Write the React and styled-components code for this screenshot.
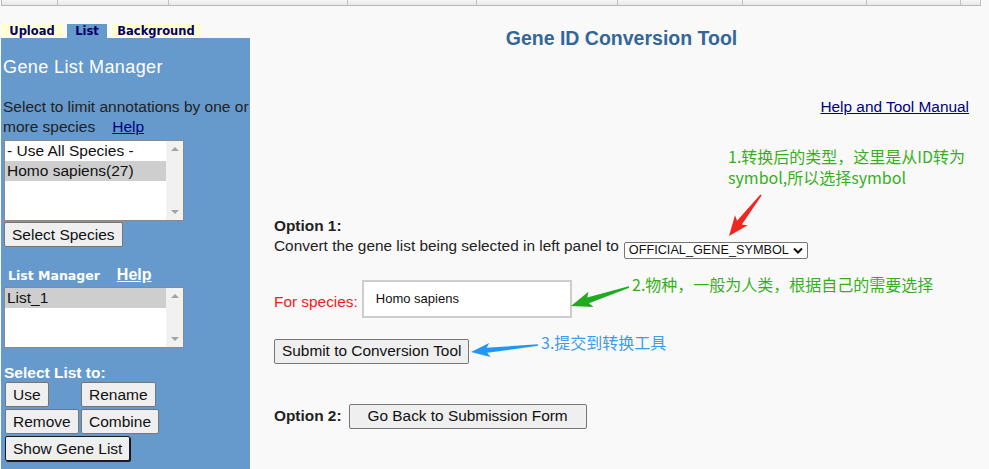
import React from 'react';
import styled, { createGlobalStyle } from 'styled-components';

const GlobalStyle = createGlobalStyle`
  html, body { margin: 0; padding: 0; background: #f9f9f9; }
  body {
    font-family: "Liberation Sans", Arial, sans-serif;
    font-size: 15.4px;
    color: #222;
  }
  * { box-sizing: border-box; }
`;

const Page = styled.div`
  width: 989px;
  height: 469px;
  overflow: hidden;
  background: #f9f9f9;
`;

const NavStrip = styled.div`
  display: flex;
  height: 6px;
  margin-left: 1px;
  width: 980px;
  border-left: 1px solid #bbb;
  border-bottom: 1px solid #b8b8b8;
`;

const NavCell = styled.div`
  width: ${(p) => p.$w}px;
  border-right: 1px solid #c2c2c2;
  background: linear-gradient(#f6f6f6, #e8e8e8);
`;

const Main = styled.div`
  display: flex;
  height: 463px;
`;

const Sidebar = styled.div`
  width: 249px;
  margin-left: 1px;
  padding-top: 18px;
  display: flex;
  flex-direction: column;
`;

const Tabs = styled.div`
  display: flex;
  height: 14px;
  gap: 4px;
`;

const Tab = styled.div`
  width: ${(p) => p.$w}px;
  background: ${(p) => (p.$active ? '#6699cc' : '#ffffd4')};
  color: #000066;
  font-family: "DejaVu Sans", Verdana, sans-serif;
  font-weight: bold;
  font-size: 11.5px;
  line-height: 15px;
  text-align: center;
`;

const Panel = styled.div`
  flex: 1;
  background: #6699cc;
  padding-left: 2px;
`;

const PanelTitle = styled.div`
  margin-top: 19px;
  color: #fff;
  font-size: 18px;
  line-height: 20px;
  letter-spacing: 0.4px;
`;

const Desc = styled.div`
  margin-top: 20px;
  font-size: 15.5px;
  line-height: 20px;
  color: #222;
  white-space: nowrap;
`;

const DarkLink = styled.a`
  color: #000080;
  text-decoration: underline;
  margin-left: 17px;
`;

const ListBox = styled.div`
  display: flex;
  width: 180px;
  height: ${(p) => p.$h}px;
  margin-top: ${(p) => p.$mt}px;
  margin-left: 1px;
  background: #fff;
  border: 1px solid #8a8a8a;
`;

const Options = styled.div`
  flex: 1;
`;

const Option = styled.div`
  height: 20px;
  line-height: 20px;
  padding-left: 2px;
  font-size: 15.5px;
  color: #111;
  background: ${(p) => (p.$selected ? '#cecece' : 'transparent')};
`;

const Scroll = styled.div`
  width: 17px;
  background: #f1f1f1;
  display: flex;
  flex-direction: column;
  justify-content: space-between;
  align-items: center;
  padding: 6px 0;
`;

const ScrollArrow = styled.div`
  width: 0;
  height: 0;
  border-left: 4px solid transparent;
  border-right: 4px solid transparent;
  border-${(p) => (p.$down ? 'top' : 'bottom')}: 4px solid #a3a3a3;
`;

const Button = styled.button`
  height: 25px;
  padding: 0 ${(p) => p.$px ?? 7}px;
  margin-top: ${(p) => p.$mt ?? 0}px;
  margin-left: ${(p) => p.$ml ?? 0}px;
  background: #efefef;
  border: 1px solid ${(p) => (p.$focus ? '#1a1a1a' : '#767676')};
  box-shadow: ${(p) => (p.$focus ? '1px 1px 0 #1a1a1a' : 'none')};
  border-radius: 2px;
  font-family: "Liberation Sans", Arial, sans-serif;
  font-size: ${(p) => p.$fs ?? 15.5}px;
  color: #111;
  white-space: nowrap;
`;

const ListHeader = styled.div`
  display: flex;
  align-items: baseline;
  margin-top: 19px;
  height: 20px;
`;

const HeaderLabel = styled.span`
  margin-left: 5px;
  color: #fff;
  font-family: "DejaVu Sans", Verdana, sans-serif;
  font-weight: bold;
  font-size: 12.5px;
`;

const WhiteLink = styled.a`
  margin-left: 17px;
  color: #fff;
  font-weight: bold;
  font-size: 16px;
  text-decoration: underline;
`;

const SelectListTo = styled.div`
  margin-top: 15px;
  margin-left: 1px;
  color: #fff;
  font-weight: bold;
  font-size: 15.5px;
  line-height: 19px;
`;

const ButtonGrid = styled.div`
  display: grid;
  grid-template-columns: 76px auto;
  row-gap: 2px;
  margin-left: 2px;
  justify-items: start;
`;

const Content = styled.div`
  flex: 1;
  position: relative;
  padding: 20px 20px 0 24px;
`;

const Title = styled.h1`
  margin: 0;
  text-align: center;
  font-size: 19.5px;
  line-height: 24px;
  color: #336699;
  font-weight: bold;
`;

const HelpRow = styled.div`
  margin-top: 47px;
  text-align: right;
  line-height: 20px;
  a { color: #000080; text-decoration: underline; }
`;

const OptionLabel = styled.div`
  margin-top: ${(p) => p.$mt ?? 0}px;
  font-weight: bold;
  line-height: 20px;
`;

const Line = styled.div`
  line-height: 20px;
  white-space: nowrap;
`;

const FakeSelect = styled.span`
  display: inline-flex;
  align-items: center;
  gap: 4px;
  height: 17px;
  margin-left: 5px;
  padding: 0 4px;
  vertical-align: -3px;
  background: #fff;
  border: 1px solid #767676;
  border-radius: 2px;
  font-size: 12.7px;
  color: #111;
`;

const SpeciesRow = styled.div`
  display: flex;
  align-items: center;
  gap: 4px;
  margin-top: 21px;
`;

const RedLabel = styled.span`
  color: #ee1c1c;
  margin-top: 6px;
`;

const SpeciesInput = styled.div`
  width: 210px;
  height: 38px;
  border: 2px solid #cdcdcd;
  background: #fff;
  padding-left: 12px;
  display: flex;
  align-items: center;
  font-size: 13px;
  color: #111;
`;

const Option2Row = styled.div`
  display: flex;
  align-items: center;
  gap: 7px;
  margin-top: 40px;
`;

const Note = styled.div`
  position: absolute;
  left: ${(p) => p.$x}px;
  top: ${(p) => p.$y}px;
  color: ${(p) => p.$color};
  font-family: "Noto Sans CJK SC", "Liberation Sans", sans-serif;
  font-size: 16px;
  line-height: 21px;
  white-space: nowrap;
`;

const Overlay = styled.svg`
  position: absolute;
  left: 0;
  top: 0;
  pointer-events: none;
`;

function Arrow({ from, to, color, h = 17, hw = 8, w1 = 3, b = 3 }) {
  const dx = to[0] - from[0];
  const dy = to[1] - from[1];
  const L = Math.hypot(dx, dy);
  const ang = (Math.atan2(dy, dx) * 180) / Math.PI;
  const pts = [
    [0, -0.8], [L - h, -w1], [L - h - b, -hw], [L, 0],
    [L - h - b, hw], [L - h, w1], [0, 0.8],
  ].map((p) => p.join(',')).join(' ');
  return (
    <polygon
      points={pts}
      fill={color}
      transform={`translate(${from[0]} ${from[1]}) rotate(${ang})`}
    />
  );
}

function Chevron() {
  return (
    <svg width="10" height="7" viewBox="0 0 10 7">
      <path d="M1 1.5 L5 5.5 L9 1.5" fill="none" stroke="#111" strokeWidth="2" />
    </svg>
  );
}

const navWidths = [56, 111, 179, 129, 141, 125, 124, 94, 20];

export default function App() {
  return (
    <Page>
      <GlobalStyle />
      <NavStrip>
        {navWidths.map((w, i) => (
          <NavCell key={i} $w={w} />
        ))}
      </NavStrip>
      <Main>
        <Sidebar>
          <Tabs>
            <Tab $w={62}>Upload</Tab>
            <Tab $w={40} $active>List</Tab>
            <Tab $w={90}>Background</Tab>
          </Tabs>
          <Panel>
            <PanelTitle>Gene List Manager</PanelTitle>
            <Desc>
              Select to limit annotations by one or
              <br />
              more species<DarkLink href="#">Help</DarkLink>
            </Desc>
            <ListBox $h={81} $mt={3}>
              <Options>
                <Option>- Use All Species -</Option>
                <Option $selected>Homo sapiens(27)</Option>
              </Options>
              <Scroll>
                <ScrollArrow />
                <ScrollArrow $down />
              </Scroll>
            </ListBox>
            <Button $mt={1} $ml={1}>Select Species</Button>
            <ListHeader>
              <HeaderLabel>List Manager</HeaderLabel>
              <WhiteLink href="#">Help</WhiteLink>
            </ListHeader>
            <ListBox $h={61} $mt={1}>
              <Options>
                <Option $selected>List_1</Option>
              </Options>
              <Scroll>
                <ScrollArrow />
                <ScrollArrow $down />
              </Scroll>
            </ListBox>
            <SelectListTo>Select List to:</SelectListTo>
            <ButtonGrid>
              <Button>Use</Button>
              <Button>Rename</Button>
              <Button>Remove</Button>
              <Button>Combine</Button>
              <Button $focus>Show Gene List</Button>
            </ButtonGrid>
          </Panel>
        </Sidebar>

        <Content>
          <Title>Gene ID Conversion Tool</Title>
          <HelpRow>
            <a href="#">Help and Tool Manual</a>
          </HelpRow>
          <OptionLabel $mt={99}>Option 1:</OptionLabel>
          <Line>
            Convert the gene list being selected in left panel to
            <FakeSelect>
              OFFICIAL_GENE_SYMBOL
              <Chevron />
            </FakeSelect>
          </Line>
          <SpeciesRow>
            <RedLabel>For species:</RedLabel>
            <SpeciesInput>Homo sapiens</SpeciesInput>
          </SpeciesRow>
          <Button $mt={21} $fs={15.4}>Submit to Conversion Tool</Button>
          <Option2Row>
            <OptionLabel>Option 2:</OptionLabel>
            <Button $fs={15.4} $px={18}>Go Back to Submission Form</Button>
          </Option2Row>

          <Note $x={478} $y={140} $color="#35b01c">
            1.转换后的类型，这里是从ID转为
            <br />
            symbol,所以选择symbol
          </Note>
          <Note $x={382} $y={268} $color="#35b01c">
            2.物种，一般为人类，根据自己的需要选择
          </Note>
          <Note $x={291} $y={326} $color="#3a9cf0">
            3.提交到转换工具
          </Note>

          <Overlay width="739" height="463">
            <Arrow from={[511, 189]} to={[479, 230]} color="#f0261f" h={17} hw={8} w1={3} />
            <Arrow from={[379, 281]} to={[321, 300]} color="#1faa1f" h={18} hw={8} w1={3} />
            <Arrow from={[288, 339]} to={[221, 346]} color="#2196f3" h={16} hw={7} w1={2.5} />
          </Overlay>
        </Content>
      </Main>
    </Page>
  );
}
